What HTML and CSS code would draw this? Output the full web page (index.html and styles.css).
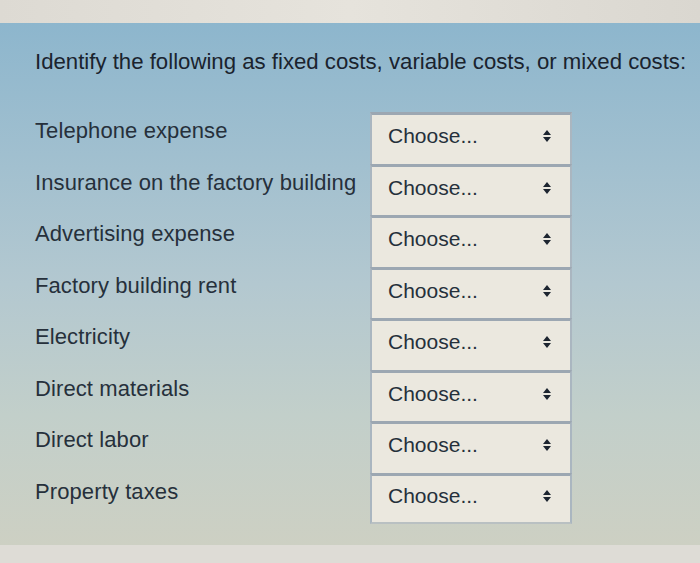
FILE: index.html
```html
<!DOCTYPE html>
<html>
<head>
<meta charset="utf-8">
<link rel="stylesheet" href="styles.css">
</head>
<body>
<div class="topstrip"></div>
<div class="panel">
  <h1 class="title">Identify the following as fixed costs, variable costs, or mixed costs:</h1>
  <div class="rows">
    <div class="row"><div class="label">Telephone expense</div><div class="select"><span>Choose...</span><svg class="arrows" viewBox="0 0 8 12" width="8" height="12"><path d="M4 0 L8 5 L0 5 Z M0 7 L8 7 L4 12 Z"/></svg></div></div>
    <div class="row"><div class="label">Insurance on the factory building</div><div class="select"><span>Choose...</span><svg class="arrows" viewBox="0 0 8 12" width="8" height="12"><path d="M4 0 L8 5 L0 5 Z M0 7 L8 7 L4 12 Z"/></svg></div></div>
    <div class="row"><div class="label">Advertising expense</div><div class="select"><span>Choose...</span><svg class="arrows" viewBox="0 0 8 12" width="8" height="12"><path d="M4 0 L8 5 L0 5 Z M0 7 L8 7 L4 12 Z"/></svg></div></div>
    <div class="row"><div class="label">Factory building rent</div><div class="select"><span>Choose...</span><svg class="arrows" viewBox="0 0 8 12" width="8" height="12"><path d="M4 0 L8 5 L0 5 Z M0 7 L8 7 L4 12 Z"/></svg></div></div>
    <div class="row"><div class="label">Electricity</div><div class="select"><span>Choose...</span><svg class="arrows" viewBox="0 0 8 12" width="8" height="12"><path d="M4 0 L8 5 L0 5 Z M0 7 L8 7 L4 12 Z"/></svg></div></div>
    <div class="row"><div class="label">Direct materials</div><div class="select"><span>Choose...</span><svg class="arrows" viewBox="0 0 8 12" width="8" height="12"><path d="M4 0 L8 5 L0 5 Z M0 7 L8 7 L4 12 Z"/></svg></div></div>
    <div class="row"><div class="label">Direct labor</div><div class="select"><span>Choose...</span><svg class="arrows" viewBox="0 0 8 12" width="8" height="12"><path d="M4 0 L8 5 L0 5 Z M0 7 L8 7 L4 12 Z"/></svg></div></div>
    <div class="row"><div class="label">Property taxes</div><div class="select last"><span>Choose...</span><svg class="arrows" viewBox="0 0 8 12" width="8" height="12"><path d="M4 0 L8 5 L0 5 Z M0 7 L8 7 L4 12 Z"/></svg></div></div>
  </div>
</div>
<div class="bottomstrip"></div>
</body>
</html>
```

FILE: styles.css
```css
html, body {
  margin: 0;
  padding: 0;
  width: 700px;
  height: 563px;
  overflow: hidden;
  font-family: "Liberation Sans", Arial, sans-serif;
  background: #d8d6cf;
}
.topstrip {
  height: 23px;
  background: linear-gradient(90deg, #dddad3 0%, #e6e3dc 50%, #dad7d0 100%);
}
.panel {
  height: 522px;
  box-sizing: border-box;
  padding: 26px 0 0 35px;
  background:
    linear-gradient(180deg, #8db6cd 0%, #a0bfcf 25%, #b3c8d0 50%, #c2cfca 75%, #cdd0c3 100%);
}
.title {
  margin: 0;
  font-size: 22.2px;
  font-weight: normal;
  color: #1a232e;
  letter-spacing: 0;
  line-height: 26px;
  white-space: nowrap;
}
.rows {
  margin-top: 37px;
  display: flex;
  flex-direction: column;
}
.row {
  display: flex;
  align-items: stretch;
  height: 51.5px;
}
.label {
  width: 335px;
  display: flex;
  align-items: center;
  font-size: 22px;
  letter-spacing: 0.1px;
  color: #26303b;
  padding-bottom: 13px;
  box-sizing: border-box;
  white-space: nowrap;
}
.select {
  width: 202px;
  box-sizing: border-box;
  background: #ebe8df;
  border-left: 2px solid #aab6c0;
  border-right: 2px solid #aab6c0;
  border-top: 3px solid #9ca7b2;
  display: flex;
  align-items: center;
  justify-content: space-between;
  padding: 0 19px 6px 16px;
  font-size: 21px;
  letter-spacing: 0;
  color: #25303b;
}
.select.last {
  border-bottom: 2px solid #b9c0c2;
}
.arrows {
  fill: #1d2530;
  display: block;
}
.bottomstrip {
  height: 18px;
  background: #dedcd6;
}
```
